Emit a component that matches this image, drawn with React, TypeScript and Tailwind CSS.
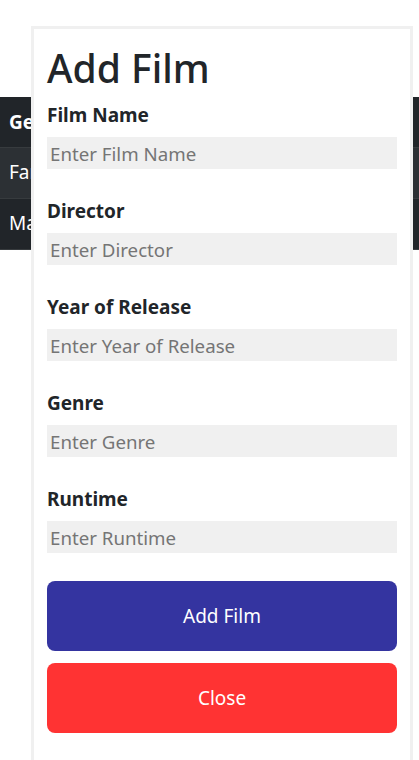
import React from "react";

const fields = [
  { label: "Film Name", placeholder: "Enter Film Name" },
  { label: "Director", placeholder: "Enter Director" },
  { label: "Year of Release", placeholder: "Enter Year of Release" },
  { label: "Genre", placeholder: "Enter Genre" },
  { label: "Runtime", placeholder: "Enter Runtime" },
];

const films = ["Fantastic Mr. Fox", "Mad Max: Fury Road"];

export default function App() {
  return (
    <div
      className="relative h-[760px] overflow-hidden bg-white text-[#212529]"
      style={{ fontFamily: '"Noto Sans", "Open Sans", sans-serif' }}
    >
      {/* film table behind the modal */}
      <div className="pt-[97px]">
        <table className="w-full border-collapse text-[19px] text-white">
          <thead>
            <tr className="h-[50px] bg-[#212529] border-b border-[#373b3e]">
              <th className="p-0 text-left font-bold">
                <div className="w-[31px] overflow-hidden whitespace-nowrap pl-[9px]">Genre</div>
              </th>
            </tr>
          </thead>
          <tbody>
            {films.map((name, i) => (
              <tr
                key={name}
                className={`h-[51px] border-b border-[#373b3e] ${
                  i % 2 === 0 ? "bg-[#2c3034]" : "bg-[#212529]"
                }`}
              >
                <td className="p-0">
                  <div className="w-[31px] overflow-hidden whitespace-nowrap pl-[9px]">{name}</div>
                </td>
              </tr>
            ))}
          </tbody>
        </table>
      </div>

      <div className="absolute left-[31px] top-[26px] h-[760px] w-[382px] border-[3px] border-[#f0f0f0] bg-white px-[13px] pt-[15px]">
        <h1 className="mb-[9px] text-[39px] leading-[48px] font-medium">Add Film</h1>
        <div className="flex flex-col gap-[28px]">
          {fields.map((f) => (
            <div key={f.label} className="flex flex-col gap-[8px]">
              <label className="text-[19px] leading-[28px] font-bold">{f.label}</label>
              <input
                placeholder={f.placeholder}
                className="h-[32px] w-full bg-[#f0f0f0] px-[3px] text-[18.7px] outline-none placeholder:text-[#757575]"
              />
            </div>
          ))}
          <div className="flex flex-col gap-[12px]">
            <button className="h-[70px] w-full rounded-[8px] bg-[#3434a0] text-[19px] text-white">
              Add Film
            </button>
            <button className="h-[70px] w-full rounded-[8px] bg-[#ff3333] text-[19px] text-white">
              Close
            </button>
          </div>
        </div>
      </div>
    </div>
  );
}
